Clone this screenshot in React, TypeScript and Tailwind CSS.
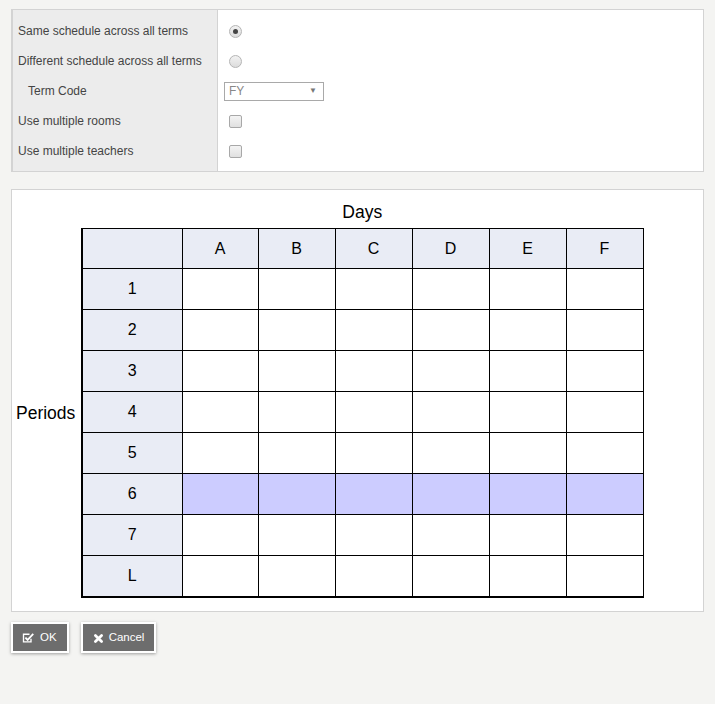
import React from "react";

const DAYS = ["A", "B", "C", "D", "E", "F"];
const PERIODS = ["1", "2", "3", "4", "5", "6", "7", "L"];
const HIGHLIGHT = "6";

function Radio({ checked }: { checked?: boolean }) {
  return (
    <span className="flex h-[13px] w-[13px] items-center justify-center rounded-full border border-[#b5b5b5] bg-gradient-to-b from-[#f2f2f2] to-[#dcdcdc]">
      {checked && <span className="h-[5px] w-[5px] rounded-full bg-[#444]" />}
    </span>
  );
}

function Checkbox() {
  return <span className="block h-[13px] w-[13px] rounded-[2px] border border-[#a8a8a8] bg-gradient-to-b from-[#f4f4f4] to-[#e0e0e0]" />;
}

function CheckSquareIcon() {
  return (
    <svg viewBox="0 0 16 16" className="h-[12px] w-[12px]" fill="none" stroke="white" strokeWidth="1.8">
      <path d="M12 9v4.2H2V3h8" strokeLinejoin="miter" />
      <path d="M4.5 7.5l3 3L15 2.5" strokeWidth="2.4" />
    </svg>
  );
}

function TimesIcon() {
  return (
    <svg viewBox="0 0 16 16" className="h-[11px] w-[11px]" fill="none" stroke="white" strokeWidth="4" strokeLinecap="round">
      <path d="M3.5 3.5l9 9M12.5 3.5l-9 9" />
    </svg>
  );
}

const OPTIONS: { label: string; indent?: boolean; control: React.ReactNode }[] = [
  { label: "Same schedule across all terms", control: <Radio checked /> },
  { label: "Different schedule across all terms", control: <Radio /> },
  {
    label: "Term Code",
    indent: true,
    control: (
      <div className="-ml-[5px] flex h-[19px] w-[100px] items-center justify-between border border-[#a9a9a9] bg-white pl-[4px] pr-[6px] text-[12px] text-[#888]">
        <span>FY</span>
        <span className="text-[8px] text-[#777]">▼</span>
      </div>
    ),
  },
  { label: "Use multiple rooms", control: <Checkbox /> },
  { label: "Use multiple teachers", control: <Checkbox /> },
];

export default function App() {
  return (
    <div className="min-h-[704px] bg-[#f4f4f2] px-[11px] pt-[9px] font-['Liberation_Sans',Arial,sans-serif]">
      {/* Options panel */}
      <div className="flex border border-[#d3d3d3] bg-white">
        <div className="w-[206px] border-l border-r border-[#d3d3d3] bg-[#ececec] pb-[5px] pt-[6px]">
          {OPTIONS.map((o) => (
            <div key={o.label} className={`flex h-[30px] items-center text-[12px] text-[#444] ${o.indent ? "pl-[15px]" : "pl-[5px]"}`}>
              {o.label}
            </div>
          ))}
        </div>
        <div className="pb-[5px] pl-[11px] pt-[6px]">
          {OPTIONS.map((o) => (
            <div key={o.label} className="flex h-[30px] items-center">
              {o.control}
            </div>
          ))}
        </div>
      </div>

      {/* Schedule grid */}
      <div className="mt-[17px] flex border border-[#d3d3d3] bg-white pb-[13px]">
        <div className="flex w-[69px] items-center pl-[4px] pt-[38px] text-[17.5px] text-black">Periods</div>
        <div>
          <div className="pb-[6px] pt-[12px] text-center text-[17.5px] leading-[20px] text-black">Days</div>
          <table className="border-collapse border-b-2 border-l-2 border-r border-t border-black text-[16px] text-black">
            <thead>
              <tr className="h-[40px]">
                <th className="w-[100px] border border-black bg-[#e9ecf5] font-normal" />
                {DAYS.map((d, i) => (
                  <th key={d} className={`${i === 0 ? "w-[76px]" : "w-[77px]"} border border-black bg-[#e9ecf5] font-normal`}>
                    {d}
                  </th>
                ))}
              </tr>
            </thead>
            <tbody>
              {PERIODS.map((p) => (
                <tr key={p} className="h-[41px]">
                  <td className="border border-black bg-[#e9ecf5] text-center">{p}</td>
                  {DAYS.map((d) => (
                    <td key={d} className={`border border-black ${p === HIGHLIGHT ? "bg-[#ccccff]" : "bg-white"}`} />
                  ))}
                </tr>
              ))}
            </tbody>
          </table>
        </div>
      </div>

      {/* Actions */}
      <div className="mt-[10px] flex gap-[12px]">
        <button className="flex h-[31px] items-center gap-[6px] border-2 border-white bg-[#6d6d6d] pl-[9px] pr-[10px] pt-[2px] text-[11.5px] text-white shadow-[0_1px_3px_rgba(0,0,0,0.35)]">
          <CheckSquareIcon />
          OK
        </button>
        <button className="flex h-[31px] items-center gap-[5px] border-2 border-white bg-[#6d6d6d] pl-[10px] pr-[10px] pt-[2px] text-[11.5px] text-white shadow-[0_1px_3px_rgba(0,0,0,0.35)]">
          <TimesIcon />
          Cancel
        </button>
      </div>
    </div>
  );
}
